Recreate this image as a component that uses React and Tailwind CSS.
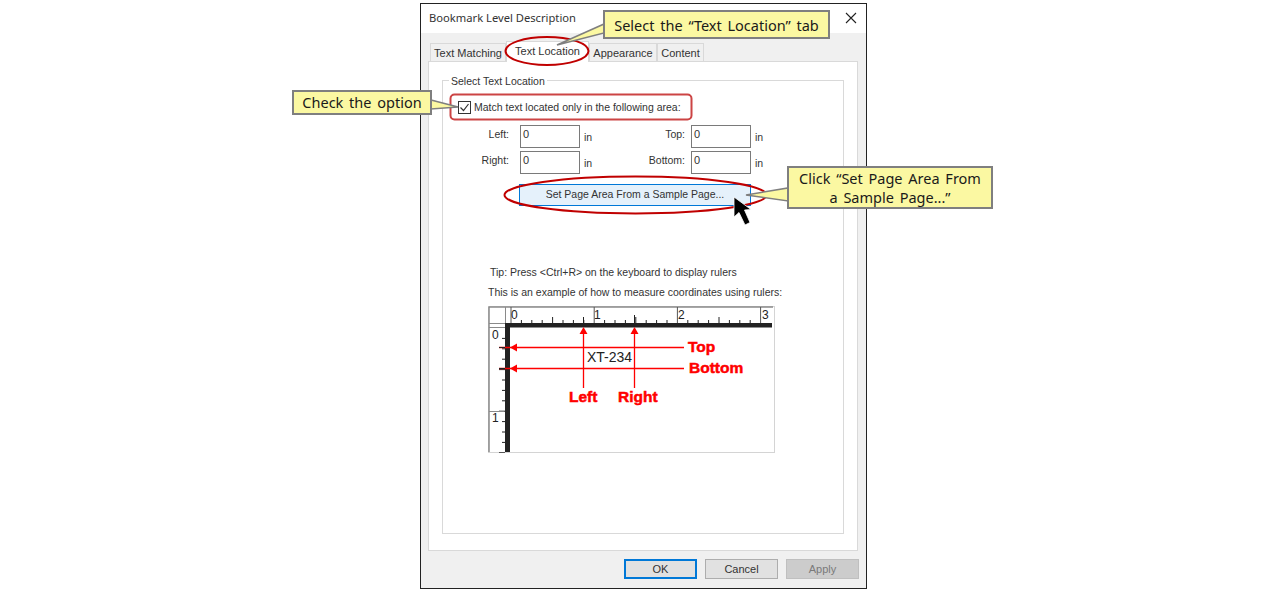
const callFont = { fontFamily: '"Noto Sans", "Liberation Sans", sans-serif' };
const dlgFont = { fontFamily: '"Liberation Sans", Arial, sans-serif' };

function Tab({ label, active, className }) {
  return (
    <div className={`flex items-center justify-center whitespace-nowrap border border-b-0 border-[#d9d9d9] text-[11px] text-[#333] ${active ? 'bg-white h-[21px] -mb-px z-10 pb-[2px]' : 'bg-[#f0f0f0] h-[18px] pt-[1px]'} ${className}`}>
      {label}
    </div>
  );
}

function Field({ label, labelW, gap }) {
  return (
    <div className="flex items-center">
      <span className="text-right text-[10.5px] text-[#333] pb-[4px]" style={{ width: labelW }}>{label}</span>
      <div className="w-[60px] h-[23px] border border-[#7a7a7a] bg-white text-[11px] text-[#333] pl-[2px] leading-[16px]" style={{ marginLeft: gap }}>0</div>
      <span className="ml-[4px] text-[10.5px] text-[#333] pt-[2px]">in</span>
    </div>
  );
}

function Btn({ children, className }) {
  return <div className={`w-[73px] h-[20px] flex items-center justify-center text-[11px] ${className}`}>{children}</div>;
}

function Ruler() {
  const ticks = [];
  for (let i = 0; i <= 24; i++) {
    const x = 23 + i * 10.4;
    const major = i % 8 === 0;
    const mid = i % 4 === 0;
    if (x > 283) break;
    ticks.push(<line key={i} x1={x} x2={x} y1={major ? 1 : mid ? 11 : 14} y2={18} stroke={major ? '#555' : '#222'} />);
  }
  const vticks = [];
  for (let i = 1; i <= 12; i++) {
    const y = 22 + i * 10.4;
    const mid = i % 4 === 0;
    vticks.push(<line key={i} x1={mid ? 11 : 14} x2={17} y1={y} y2={y} stroke="#222" />);
  }
  return (
    <svg width="287" height="147" viewBox="0 0 287 147" className="block" style={{ fontFamily: '"Liberation Sans", sans-serif' }}>
      <rect x="0.5" y="0.5" width="286" height="146" fill="#fff" stroke="#d4d4d4" />
      <path d="M1 1H285M1 0.5V146" stroke="#8a8a8a" strokeWidth="1.5" fill="none" />
      <path d="M1 17.5H17M17.5 1V17M1 21.5H17" stroke="#8a8a8a" fill="none" />
      {ticks}
      {vticks}
      <path d="M1 105.5H16" stroke="#8a8a8a" />
      <rect x="18" y="17" width="266" height="4.5" fill="#222" />
      <rect x="17" y="17" width="5" height="129" fill="#222" />
      <text x="23" y="13" fontSize="12" fill="#222">0</text>
      <text x="106" y="13" fontSize="12" fill="#222">1</text>
      <text x="190" y="13" fontSize="12" fill="#222">2</text>
      <text x="274" y="13" fontSize="12" fill="#222">3</text>
      <text x="4" y="33" fontSize="12" fill="#222">0</text>
      <text x="4" y="116" fontSize="12" fill="#222">1</text>
      <path d="M11 41.5H196M11 62.5H196M95.5 82V26M146.5 82V26" stroke="#ff0000" strokeWidth="1.3" />
      <path d="M11 41.5H17M11 62.5H17" stroke="#222" />
      <path d="M95.5 11V21M146.5 9V21" stroke="#222" />
      <path d="M22 41.5L29 37.5V45.5ZM22 62.5L29 58.5V66.5ZM95.5 21L91.5 28H99.5ZM146.5 21L142.5 28H150.5Z" fill="#ff0000" />
      <text x="99" y="56" fontSize="14" fill="#222">XT-234</text>
      <g fontSize="15.5" fontWeight="700" fill="#ff0000" stroke="#ff0000" strokeWidth="0.5">
        <text x="200" y="46">Top</text>
        <text x="201" y="67">Bottom</text>
        <text x="81" y="96">Left</text>
        <text x="130" y="96">Right</text>
      </g>
    </svg>
  );
}

function Callout({ className, children }) {
  return (
    <div className={`absolute z-30 flex items-center justify-center text-center bg-[#fbf8a2] border-2 border-[#7f7f7f] text-[14.5px] leading-[19px] text-[#1a1a1a] [word-spacing:2px] ${className}`} style={callFont}>
      {children}
    </div>
  );
}

export default function App() {
  return (
    <div className="relative w-[1280px] h-[591px] bg-white overflow-hidden pt-[3px] pl-[420px]" style={dlgFont}>
      <div className="w-[447px] h-[586px] border border-[#222] flex flex-col bg-white">
        <div className="relative h-[29px] shrink-0 flex items-center pl-[8px] text-[12px] text-[#333]" style={callFont}>
          <span className="text-[11.2px]">Bookmark Level Description</span>
          <svg className="absolute right-[9px] top-[8px]" width="12" height="12" viewBox="0 0 12 12">
            <path d="M1 1L11 11M11 1L1 11" stroke="#222" strokeWidth="1.1" />
          </svg>
        </div>
        <div className="flex-1 bg-[#f0f0f0] flex flex-col pt-[10px]">
          <div className="flex items-end pl-[9px] h-[18px]">
            <Tab label="Text Matching" className="w-[76px]" />
            <Tab label="Text Location" active className="w-[83px]" />
            <Tab label="Appearance" className="w-[68px]" />
            <Tab label="Content" className="w-[47px]" />
          </div>
          <div className="ml-[7px] w-[430px] h-[490px] bg-white border border-[#d9d9d9] pl-[13px] pt-[18px]">
            <div className="relative w-[402px] h-[454px] border border-[#d9d9d9]">
              <span className="absolute left-[6px] -top-[8px] bg-white px-[2px] text-[10.5px] leading-[16px] text-[#333]">Select Text Location</span>
              <div className="flex items-center pl-[15px] pt-[19px] h-[34px] text-[10.5px] text-[#333]">
                <div className="w-[13px] h-[13px] border border-[#333] bg-white flex items-center justify-center">
                  <svg width="11" height="11" viewBox="0 0 11 11"><path d="M1.5 5.5L4.5 8.5L9.5 2" stroke="#333" strokeWidth="1.2" fill="none" /></svg>
                </div>
                <span className="ml-[3px]">Match text located only in the following area:</span>
              </div>
              <div className="mt-[10px] flex flex-col gap-[3px]">
                <div className="flex">
                  <div className="w-[172px]"><Field label="Left:" labelW="66px" gap="11px" /></div>
                  <Field label="Top:" labelW="70px" gap="6px" />
                </div>
                <div className="flex">
                  <div className="w-[172px]"><Field label="Right:" labelW="66px" gap="11px" /></div>
                  <Field label="Bottom:" labelW="70px" gap="6px" />
                </div>
              </div>
              <div className="ml-[76px] mt-[10px] w-[232px] h-[22px] bg-[#e5f1fb] border border-[#0078d7] flex items-center justify-center text-[10.5px] text-[#333]">
                Set Page Area From a Sample Page...
              </div>
              <div className="pl-[47px] mt-[58px] text-[10.5px] leading-[16px] text-[#333]">Tip: Press &lt;Ctrl+R&gt; on the keyboard to display rulers</div>
              <div className="pl-[45px] mt-[4px] text-[10.5px] leading-[16px] text-[#333]">This is an example of how to measure coordinates using rulers:</div>
              <div className="pl-[45px] mt-[6px]"><Ruler /></div>
            </div>
          </div>
          <div className="flex justify-end gap-[8px] pr-[7px] mt-[8px]">
            <Btn className="border-2 border-[#0078d7] bg-[#e1e1e1] text-[#333]">OK</Btn>
            <Btn className="border border-[#adadad] bg-[#e1e1e1] text-[#333]">Cancel</Btn>
            <Btn className="border border-[#bfbfbf] bg-[#cccccc] text-[#7a7a7a]">Apply</Btn>
          </div>
        </div>
      </div>

      <svg className="absolute left-0 top-0 z-20 pointer-events-none" width="1280" height="591" viewBox="0 0 1280 591">
        <ellipse cx="547" cy="51" rx="41.5" ry="14" fill="none" stroke="#c00000" strokeWidth="2" />
        <ellipse cx="635.5" cy="195" rx="131" ry="18.5" fill="none" stroke="#c00000" strokeWidth="2" />
        <rect x="450.5" y="94.5" width="241" height="25" rx="4" fill="none" stroke="#cc4444" strokeWidth="2" />
        <path d="M604 24L604 33L557 45Z" fill="#fbf8a2" stroke="#7f7f7f" strokeWidth="1.5" />
        <path d="M431 100L431 109L458 107Z" fill="#fbf8a2" stroke="#7f7f7f" strokeWidth="1.5" />
        <path d="M788 188L788 201L746 195Z" fill="#fbf8a2" stroke="#7f7f7f" strokeWidth="1.5" />
        <path d="M734 197V217L739 212.5L745 225L750 222.5L744.5 210L751 209.5Z" fill="#000" stroke="#fff" strokeWidth="0.8" />
      </svg>
      <Callout className="left-[603px] top-[10px] w-[227px] h-[29px] pt-[1px]">Select the “Text Location” tab</Callout>
      <Callout className="left-[292px] top-[90px] w-[140px] h-[25px]">Check the option</Callout>
      <Callout className="left-[787px] top-[166px] w-[206px] h-[43px]"><span>Click “Set Page Area From<br />a Sample Page...”</span></Callout>
    </div>
  );
}
